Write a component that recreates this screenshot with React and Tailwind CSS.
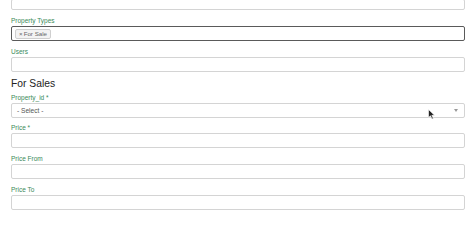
import React from "react";

function Label({ children }) {
  return (
    <div className="h-[9px] text-[6.5px] leading-[9px] text-[#3a8a5a] mb-[1px]">{children}</div>
  );
}

function Input() {
  return <div className="h-[15px] border border-[#d4d4d4] rounded-[2px] bg-white" />;
}

export default function App() {
  return (
    <div
      className="w-[474px] h-[220px] overflow-hidden bg-white relative pl-[11px] pr-[9px]"
      style={{ fontFamily: '"Liberation Sans", Arial, sans-serif' }}
    >
      <div className="h-[11px] -mt-[1px] border border-[#d4d4d4] rounded-[2px] mb-[6px]" />

      <div className="mb-[6px]">
        <Label>Property Types</Label>
        <div className="h-[15px] border border-[#5a5a5a] rounded-[2px] bg-white flex items-center pl-[3px]">
          <div className="h-[10px] border border-[#cfcfcf] bg-[#f3f3f3] rounded-[2px] px-[3px] flex items-center text-[6.2px] text-[#666]">
            <span className="mr-[1px]">×</span>For Sale
          </div>
        </div>
      </div>

      <div className="mb-[3px]">
        <Label>Users</Label>
        <Input />
      </div>

      <div className="h-[18px] flex items-center text-[10.3px] text-[#222]">For Sales</div>

      <div className="mb-[5px]">
        <Label>Property_id *</Label>
        <div className="h-[15px] border border-[#d4d4d4] rounded-[2px] bg-white flex items-center justify-between pl-[5px] pr-[6px]">
          <span className="text-[6.6px] text-[#555]">- Select -</span>
          <svg width="4" height="3" viewBox="0 0 4 3">
            <path d="M0 0 L4 0 L2 3 Z" fill="#999" />
          </svg>
        </div>
      </div>

      <div className="mb-[6px]">
        <Label>Price *</Label>
        <Input />
      </div>

      <div className="mb-[6px]">
        <Label>Price From</Label>
        <Input />
      </div>

      <div className="mb-[6px]">
        <Label>Price To</Label>
        <Input />
      </div>

      <svg className="absolute left-[428px] top-[109px]" width="7" height="11" viewBox="0 0 7 11">
        <path d="M0.5 0.5 L0.5 8.5 L2.5 6.8 L4 10 L5.3 9.4 L3.8 6.3 L6.5 6.3 Z" fill="#222" stroke="#fff" strokeWidth="0.6" />
      </svg>
    </div>
  );
}
